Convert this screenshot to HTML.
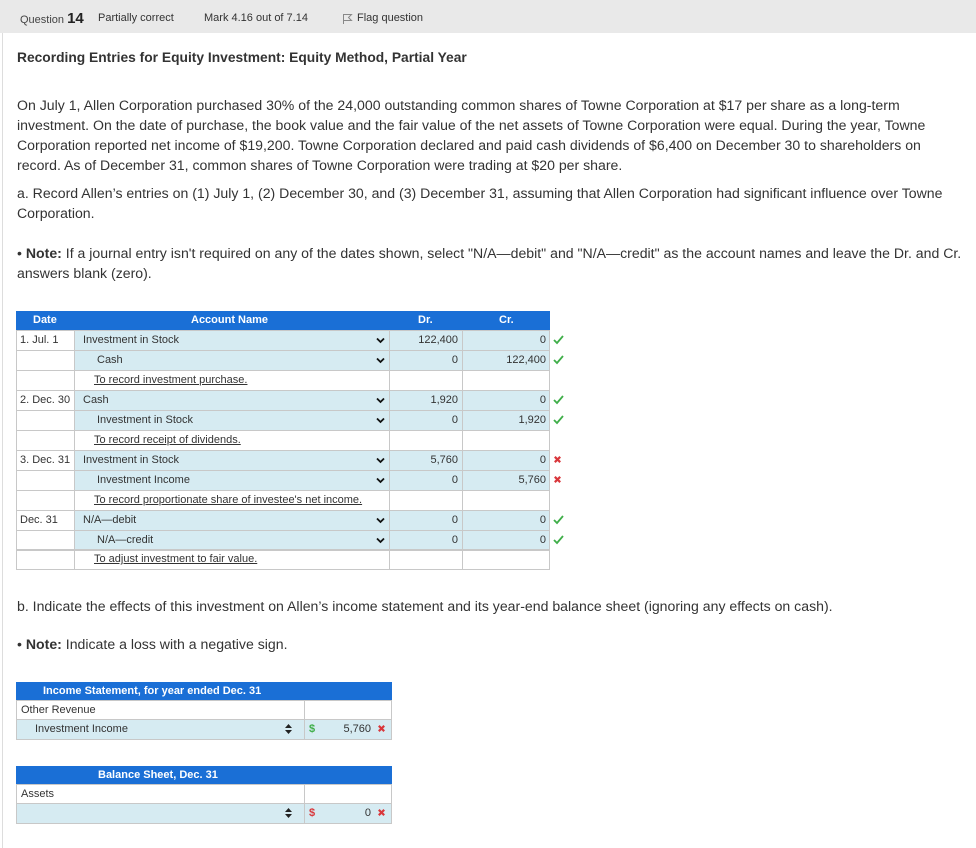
<!DOCTYPE html>
<html><head><meta charset="utf-8"><style>
*{margin:0;padding:0;box-sizing:border-box}
body{width:976px;height:848px;background:#fff;font-family:"Liberation Sans",sans-serif;color:#333;position:relative;overflow:hidden}
.a{position:absolute;white-space:nowrap}
.p{font-size:14.1px;line-height:20px}
.lb{position:absolute;left:2px;top:33px;width:1px;height:815px;background:#ddd}
.hdr{position:absolute;left:0;top:0;width:976px;height:33px;background:#e9e9e9}
.blue{position:absolute;background:#1a6fd6;color:#fff;font-weight:bold;font-size:11px}
.cell{position:absolute;border:1px solid #c8c8c8;font-size:11px;line-height:18px;color:#333;white-space:nowrap}
.lt{background:#d6ebf2}
.chev{position:absolute;right:4px;top:6px}
u{text-decoration:underline}
.spin{position:absolute;left:268px;top:4px}
svg{display:block}
.hl{position:absolute;top:314px;font-size:11px;font-weight:bold;color:#fff}
</style></head><body>
<div class="hdr"></div>
<div class="lb"></div>
<div class="a" style="left:20px;top:10px;font-size:11px;color:#444">Question <b style="font-size:15px;color:#222">14</b></div>
<div class="a" style="left:98px;top:12px;font-size:11px;color:#333">Partially correct</div>
<div class="a" style="left:204px;top:12px;font-size:11px;color:#333">Mark 4.16 out of 7.14</div>
<div class="a" style="left:342px;top:13px;width:11px;height:11px"><svg width="11" height="11" viewBox="0 0 11 11"><path d="M1.5 1v10M1.5 1.5h8l-3 3 3 3h-8" fill="none" stroke="#888" stroke-width="1"/></svg></div>
<div class="a" style="left:357px;top:12px;font-size:11px;color:#333">Flag question</div>
<div class="a" style="left:17px;top:50px;font-size:13.8px;font-weight:bold;color:#333">Recording Entries for Equity Investment: Equity Method, Partial Year</div>
<div class="a p" style="left:17px;top:95px">On July 1, Allen Corporation purchased 30% of the 24,000 outstanding common shares of Towne Corporation at $17 per share as a long-term<br>investment. On the date of purchase, the book value and the fair value of the net assets of Towne Corporation were equal. During the year, Towne<br>Corporation reported net income of $19,200. Towne Corporation declared and paid cash dividends of $6,400 on December 30 to shareholders on<br>record. As of December 31, common shares of Towne Corporation were trading at $20 per share.</div>
<div class="a p" style="left:17px;top:183px">a. Record Allen’s entries on (1) July 1, (2) December 30, and (3) December 31, assuming that Allen Corporation had significant influence over Towne<br>Corporation.</div>
<div class="a p" style="left:17px;top:243px">• <b>Note:</b> If a journal entry isn't required on any of the dates shown, select "N/A—debit" and "N/A—credit" as the account names and leave the Dr. and Cr.<br>answers blank (zero).</div>

<div class="blue" style="left:16px;top:311px;width:534px;height:19px"></div>
<div class="hl" style="left:33px">Date</div>
<div class="hl" style="left:191px">Account Name</div>
<div class="hl" style="left:418px">Dr.</div>
<div class="hl" style="left:499px">Cr.</div>

<div id="rows"></div>
<script>
var rows=[
["1. Jul. 1","Investment in Stock",0,"122,400","0","ok"],
["","Cash",1,"0","122,400","ok"],
["","To record investment purchase.",2],
["2. Dec. 30","Cash",0,"1,920","0","ok"],
["","Investment in Stock",1,"0","1,920","ok"],
["","To record receipt of dividends.",2],
["3. Dec. 31","Investment in Stock",0,"5,760","0","x"],
["","Investment Income",1,"0","5,760","x"],
["","To record proportionate share of investee's net income.",2],
["Dec. 31","N/A—debit",0,"0","0","ok"],
["","N/A—credit",1,"0","0","ok"],
["","To adjust investment to fair value.",2]];
var chev='<svg class="chev" width="9" height="7" viewBox="0 0 9 7"><path d="M1 1.5l3.5 3.5 3.5-3.5" fill="none" stroke="#111" stroke-width="1.8"/></svg>';
var ok='<svg width="11" height="10" viewBox="0 0 11 10"><path d="M1 5l3 3 6-7" fill="none" stroke="#3fae49" stroke-width="1.8"/></svg>';
var xx='<svg width="9" height="9" viewBox="0 0 10 10"><path d="M2 2l6 6M8 2l-6 6" fill="none" stroke="#d9373b" stroke-width="2.4"/></svg>';
var h="";
rows.forEach(function(r,i){
 var y=330+i*20-(i>=11?1:0);
 var t=r[2]==2;
 h+='<div class="cell" style="left:16px;top:'+y+'px;width:59px;height:21px;padding-left:3px">'+r[0]+'</div>';
 h+='<div class="cell '+(t?'':'lt')+'" style="left:74px;top:'+y+'px;width:316px;height:21px;padding-left:'+(r[2]==0?8:r[2]==1?22:19)+'px">'+(t?'<u>'+r[1]+'</u>':r[1]+chev)+'</div>';
 h+='<div class="cell '+(t?'':'lt')+'" style="left:389px;top:'+y+'px;width:74px;height:21px;text-align:right;padding-right:4px">'+(t?'':r[3])+'</div>';
 h+='<div class="cell '+(t?'':'lt')+'" style="left:462px;top:'+y+'px;width:88px;height:21px;text-align:right;padding-right:3px">'+(t?'':r[4])+'</div>';
 if(!t)h+='<div class="a" style="left:553px;top:'+(y+5)+'px">'+(r[5]=="ok"?ok:xx)+'</div>';
});
document.getElementById('rows').innerHTML=h;
</script>

<div class="a p" style="left:17px;top:596px">b. Indicate the effects of this investment on Allen’s income statement and its year-end balance sheet (ignoring any effects on cash).</div>
<div class="a p" style="left:17px;top:634px">• <b>Note:</b> Indicate a loss with a negative sign.</div>

<div class="blue" style="left:16px;top:682px;width:376px;height:18px"></div>
<div class="a" style="left:43px;top:685px;font-size:11px;font-weight:bold;color:#fff">Income Statement, for year ended Dec. 31</div>
<div class="cell" style="left:16px;top:700px;width:289px;height:20px;padding-left:4px">Other Revenue</div>
<div class="cell" style="left:304px;top:700px;width:88px;height:20px"></div>
<div class="cell lt" style="left:16px;top:719px;width:289px;height:21px;padding-left:18px">Investment Income<svg class="spin" width="7" height="10" viewBox="0 0 7 10"><path d="M0 4L3.5 0 7 4zM0 6L3.5 10 7 6z" fill="#222"/></svg></div>
<div class="cell lt" style="left:304px;top:719px;width:88px;height:21px"><span class="a" style="left:4px;top:0;color:#3fae49;font-weight:bold">$</span><span class="a" style="right:20px;top:0">5,760</span><span class="a" style="right:5px;top:4px">__X__</span></div>

<div class="blue" style="left:16px;top:766px;width:376px;height:18px"></div>
<div class="a" style="left:98px;top:769px;font-size:11px;font-weight:bold;color:#fff">Balance Sheet, Dec. 31</div>
<div class="cell" style="left:16px;top:784px;width:289px;height:20px;padding-left:4px">Assets</div>
<div class="cell" style="left:304px;top:784px;width:88px;height:20px"></div>
<div class="cell lt" style="left:16px;top:803px;width:289px;height:21px"><svg class="spin" width="7" height="10" viewBox="0 0 7 10"><path d="M0 4L3.5 0 7 4zM0 6L3.5 10 7 6z" fill="#222"/></svg></div>
<div class="cell lt" style="left:304px;top:803px;width:88px;height:21px"><span class="a" style="left:4px;top:0;color:#d9373b;font-weight:bold">$</span><span class="a" style="right:20px;top:0">0</span><span class="a" style="right:5px;top:4px">__X__</span></div>
<script>document.body.innerHTML=document.body.innerHTML.split('__X__').join(xx);</script>
</body></html>
